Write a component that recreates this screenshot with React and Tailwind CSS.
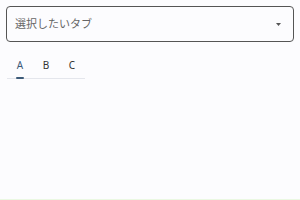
import React, { useState } from "react";

const tabs = ["A", "B", "C"];

export default function App() {
  const [active, setActive] = useState(0);

  return (
    <div
      className="w-[300px] h-[200px] bg-[#fcfcfe] flex flex-col overflow-hidden"
      style={{ fontFamily: '"Noto Sans", "Noto Sans CJK JP", sans-serif' }}
    >
      <div className="flex-1 px-[6px] pt-[6px]">
        <div className="h-[36px] w-[288px] border border-[#555] rounded-[4px] flex items-center justify-between pl-[8px] pr-[12px]">
          <span className="text-[11px] text-[#666]">選択したいタブ</span>
          <svg width="5" height="3" viewBox="0 0 5 3">
            <path d="M0 0h5L2.5 3z" fill="#555" />
          </svg>
        </div>

        <div className="mt-[11px] ml-[1px] flex w-[78px] border-b border-[#e4e6ec]">
          {tabs.map((t, i) => (
            <button
              key={t}
              onClick={() => setActive(i)}
              className={
                "relative w-[26px] h-[25px] flex items-center justify-center text-[10px] " +
                (i === active ? "text-[#3c5a7a]" : "text-[#333]")
              }
            >
              {t}
              {i === active && (
                <span className="absolute bottom-[-1px] left-[9px] w-[8px] h-[2px] rounded-full bg-[#3c5a78]" />
              )}
            </button>
          ))}
        </div>
      </div>
      <div className="h-[1px] bg-[#eaf8e2]" />
    </div>
  );
}
